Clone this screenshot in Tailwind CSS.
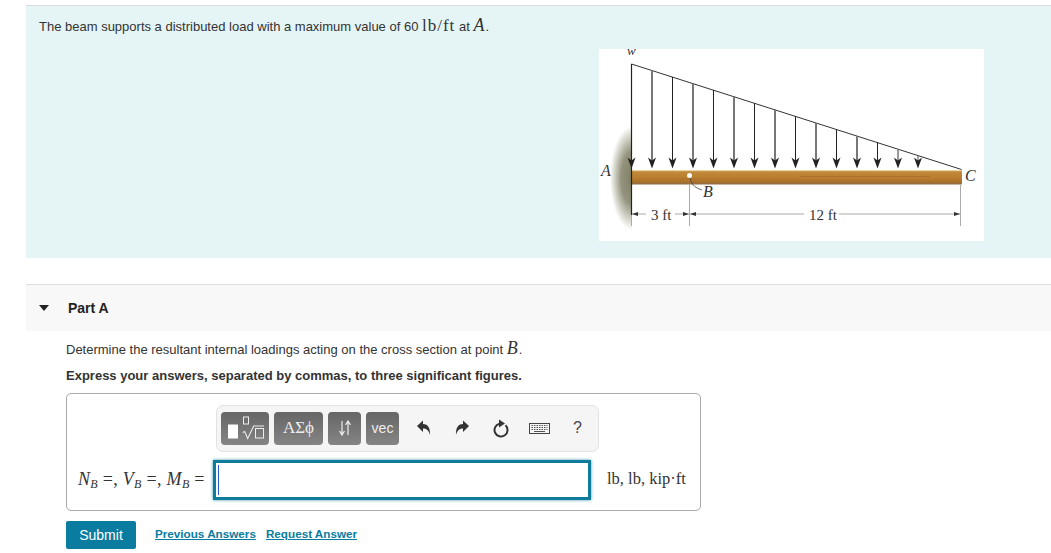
<!DOCTYPE html>
<html lang="en">
<head>
    <meta charset="UTF-8">
    <title>Part A</title>
    <script src="https://cdn.jsdelivr.net/npm/@tailwindcss/browser@4"></script>
</head>
<body class="bg-white h-screen overflow-hidden font-['Liberation_Sans',sans-serif] text-[#333] text-[13px]">

    <div class="pt-[5px] pl-[26px]">
        <!-- intro panel -->
        <section class="h-[253px] bg-[#e5f5f6] border-t border-[#dcdcdc] flex justify-between pr-[67px]">
            <p class="pl-[13px] pt-[9px] leading-[20px]">The beam supports a distributed load with a maximum value of 60 <span class="font-['Liberation_Serif',serif] text-[17px] tracking-[1px]">lb/ft</span> at <i class="font-['Liberation_Serif',serif] text-[18px] tracking-[1px]">A</i>.</p>
            <figure class="mt-[43px] w-[385px] h-[192px] bg-white shrink-0">
                <svg width="385" height="192" viewBox="599 49 385 192" class="overflow-visible">
                    <defs>
                        <radialGradient id="wall" cx="0.5" cy="0.5" r="0.5">
                            <stop offset="0" stop-color="#7f7f66"/>
                            <stop offset="0.5" stop-color="#94947e"/>
                            <stop offset="0.8" stop-color="#d4d4ca"/>
                            <stop offset="1" stop-color="#ffffff"/>
                        </radialGradient>
                        <linearGradient id="wood" x1="0" y1="0" x2="0" y2="1">
                            <stop offset="0" stop-color="#fbeec8"/>
                            <stop offset="0.12" stop-color="#c08a3c"/>
                            <stop offset="0.5" stop-color="#bb7f30"/>
                            <stop offset="0.8" stop-color="#ab722a"/>
                            <stop offset="1" stop-color="#8c6a45"/>
                        </linearGradient>
                        <clipPath id="wallClip"><rect x="599" y="100" width="33" height="141"/></clipPath>
                        <g id="head"><path d="M-4 -11 L0 -8 L4 -11 L0 0 Z" fill="#222"/></g>
                    </defs>
                    <ellipse cx="632" cy="178" rx="22" ry="52" fill="url(#wall)" clip-path="url(#wallClip)"/>
                    <rect x="632" y="170" width="330" height="14.5" fill="url(#wood)"/>
                    <path d="M640 179 H760 M800 176.500 H930" stroke="#ad7229" stroke-width="1" fill="none"/>
                    <path d="M631.500 64 L961.500 169.500" stroke="#333" stroke-width="1" fill="none"/>
                    <!-- load arrows -->
                    <g fill="none">
                        <path d="M631.500 64 V215" stroke="#222" stroke-width="1.200"/>
                        <path d="M631.500 215 V226" stroke="#aaa"/>
                        <path d="M652 70 V162" stroke="#777" stroke-width="2"/>
                        <path d="M672.500 77 V162" stroke="#222" stroke-width="1"/>
                        <path d="M693 83.500 V162" stroke="#777" stroke-width="2"/>
                        <path d="M713.500 90 V162" stroke="#222" stroke-width="1"/>
                        <path d="M734 96.500 V162" stroke="#777" stroke-width="2"/>
                        <path d="M754.500 103 V162" stroke="#222" stroke-width="1"/>
                        <path d="M775 109.500 V162" stroke="#777" stroke-width="2"/>
                        <path d="M795.500 116 V162" stroke="#222" stroke-width="1"/>
                        <path d="M816 123 V162" stroke="#777" stroke-width="2"/>
                        <path d="M836.500 129.500 V162" stroke="#222" stroke-width="1"/>
                        <path d="M857 136 V162" stroke="#777" stroke-width="2"/>
                        <path d="M877.500 142.500 V162" stroke="#222" stroke-width="1"/>
                        <path d="M898 149 V162" stroke="#777" stroke-width="1.500"/>
                        <path d="M918 155.500 V162" stroke="#555" stroke-width="1"/>
                    </g>
                    <use href="#head" x="631.5" y="168.500"/>
                    <use href="#head" x="652" y="168.500"/>
                    <use href="#head" x="672.5" y="168.500"/>
                    <use href="#head" x="693" y="168.500"/>
                    <use href="#head" x="713.5" y="168.500"/>
                    <use href="#head" x="734" y="168.500"/>
                    <use href="#head" x="754.5" y="168.500"/>
                    <use href="#head" x="775" y="168.500"/>
                    <use href="#head" x="795.5" y="168.500"/>
                    <use href="#head" x="816" y="168.500"/>
                    <use href="#head" x="836.5" y="168.500"/>
                    <use href="#head" x="857" y="168.500"/>
                    <use href="#head" x="877.5" y="168.500"/>
                    <use href="#head" x="898" y="168.500"/>
                    <use href="#head" x="918" y="168.500"/>
                    <!-- point B -->
                    <circle cx="689.500" cy="175.500" r="2.500" fill="#fff"/>
                    <path d="M690 178 C692 186 696 188 702 190" stroke="#444" stroke-width="0.800" fill="none"/>
                    <!-- dimensions -->
                    <g stroke="#aaa" stroke-width="1" fill="none">
                        <path d="M689.500 184 V226 M960.500 185 V226"/>
                        <path d="M632 214 H646 M675 214 H689 M690 214 H804 M839 214 H960"/>
                    </g>
                    <path d="M632 214 l6 -2 v4 Z M689 214 l-6 -2 v4 Z M690 214 l6 -2 v4 Z M960 214 l-6 -2 v4 Z" fill="#333"/>
                    <g font-family="Liberation Serif, serif" fill="#333">
                        <text x="627" y="55" font-size="13" font-style="italic">w</text>
                        <text x="601" y="176" font-size="16" font-style="italic">A</text>
                        <text x="703" y="197" font-size="16" font-style="italic">B</text>
                        <text x="965" y="181" font-size="16" font-style="italic">C</text>
                        <text x="651" y="219.500" font-size="15">3 ft</text>
                        <text x="809" y="219.500" font-size="15">12 ft</text>
                    </g>
                </svg>
            </figure>
        </section>

        <!-- part header -->
        <header class="mt-[26px] h-[47px] bg-[#f8f8f8] border-t border-[#dedede] flex items-center">
            <span class="ml-[13px] w-0 h-0 border-x-[5.5px] border-x-transparent border-t-[6px] border-t-[#222]"></span>
            <h2 class="ml-[19px] font-bold text-[14px] text-[#222]">Part A</h2>
        </header>

        <div class="pl-[40px]">
            <p class="mt-[7px] leading-[20px]">Determine the resultant internal loadings acting on the cross section at point <i class="font-['Liberation_Serif',serif] text-[18px] tracking-[1px]">B</i>.</p>
            <p class="mt-[6px] leading-[20px] font-bold">Express your answers, separated by commas, to three significant figures.</p>

            <!-- answer box -->
            <div class="mt-[7px] w-[635px] h-[118px] border border-[#aaa] rounded-[5px] relative pt-[11px]">
                <div class="ml-[149px] w-[383px] h-[47px] bg-[#f5f5f5] border border-[#e2e2e2] rounded-[7px] flex items-center pl-[4px] pb-[1px]">
                    <button class="w-[48px] h-[33px] rounded-[4px] bg-gradient-to-b from-[#666] to-[#858585] flex items-center justify-center">
                        <svg width="38" height="26" viewBox="0 0 38 26" fill="none">
                            <rect x="2" y="9.500" width="10" height="14" fill="#fff"/>
                            <rect x="17.500" y="2" width="5" height="7" stroke="#eee" stroke-width="1"/>
                            <path d="M16.700 17.500 l2 -1 l3 7 l6 -12.500 h10.300" stroke="#eee" stroke-width="1.100"/>
                            <rect x="29.500" y="13.500" width="8" height="9.500" stroke="#eee" stroke-width="1"/>
                        </svg>
                    </button>
                    <button class="ml-[5px] w-[49px] h-[33px] rounded-[4px] bg-gradient-to-b from-[#666] to-[#858585] text-[#eee] font-['Liberation_Serif',serif] text-[17px]">ΑΣϕ</button>
                    <button class="ml-[5px] w-[33px] h-[33px] rounded-[4px] bg-gradient-to-b from-[#666] to-[#858585] flex items-center justify-center">
                        <svg width="14" height="16" viewBox="0 0 14 16" fill="none" stroke="#eee" stroke-width="1.200">
                            <path d="M4 1 V14 M1.500 11 L4 15 L6.500 11"/>
                            <path d="M10 15 V2 M7.500 5 L10 1 L12.500 5"/>
                        </svg>
                    </button>
                    <button class="ml-[5px] w-[33px] h-[33px] rounded-[4px] bg-gradient-to-b from-[#666] to-[#858585] text-[#eee] text-[14px]">vec</button>
                    <svg class="ml-[18px]" width="14" height="16" viewBox="0 0 14 16"><path d="M0 6 L6 0.500 V4 C10 4 13.500 7 13 15 C12 11 10 8.500 6 8.500 V12 Z" fill="#333"/></svg>
                    <svg class="ml-[24px]" width="14" height="16" viewBox="0 0 14 16"><path d="M14 6 L8 0.500 V4 C4 4 0.500 7 1 15 C2 11 4 8.500 8 8.500 V12 Z" fill="#333"/></svg>
                    <svg class="ml-[24px]" width="16" height="19" viewBox="0 0 16 19" fill="none"><path d="M6.500 4.700 A6.500 6.500 0 1 0 12.500 6.300" stroke="#333" stroke-width="2"/><path d="M6 0.500 L12 4.500 L6 8.500 Z" fill="#333"/></svg>
                    <svg class="ml-[20px]" width="21" height="11" viewBox="0 0 21 11" fill="none"><rect x="0.500" y="0.500" width="20" height="10" stroke="#444"/><path d="M2.500 2.500 H18.500 M2.500 4.500 H18.500 M2.500 6.500 H18.500" stroke="#555" stroke-dasharray="1.500 1"/><path d="M5 8.500 H16" stroke="#555"/></svg>
                    <span class="ml-[23px] text-[16px] text-[#444]">?</span>
                </div>

                <div class="mt-[8px] flex items-center">
                    <div class="ml-[11px] mb-[2px] w-[127px] font-['Liberation_Serif',serif] text-[18px] text-[#333] whitespace-nowrap tracking-[0.3px]">
                        <i>N<sub class="text-[12px]">B</sub></i> =, <i>V<sub class="text-[12px]">B</sub></i> =, <i>M<sub class="text-[12px]">B</sub></i> =
                    </div>
                    <div class="ml-[8px] w-[378px] h-[40px] border-[3px] border-[#0f7c9c] shadow-[0_0_3px_#3d9ab5] flex items-center pl-[2px]">
                        <span class="w-px h-[30px] bg-[#2a5bd7]"></span>
                    </div>
                    <span class="ml-[16px] mb-[2px] font-['Liberation_Serif',serif] text-[16.500px] whitespace-nowrap">lb, lb, kip·ft</span>
                </div>
            </div>

            <div class="mt-[10px] flex items-center">
                <button class="w-[70px] h-[28px] bg-[#0a7ca0] rounded-[2px] text-white text-[14px]">Submit</button>
                <a href="#" class="ml-[19px] mb-[2px] text-[11.700px] font-bold text-[#0a7ca0] underline">Previous Answers</a>
                <a href="#" class="ml-[10px] mb-[2px] text-[11.700px] font-bold text-[#0a7ca0] underline">Request Answer</a>
            </div>
        </div>
    </div>

</body>
</html>
